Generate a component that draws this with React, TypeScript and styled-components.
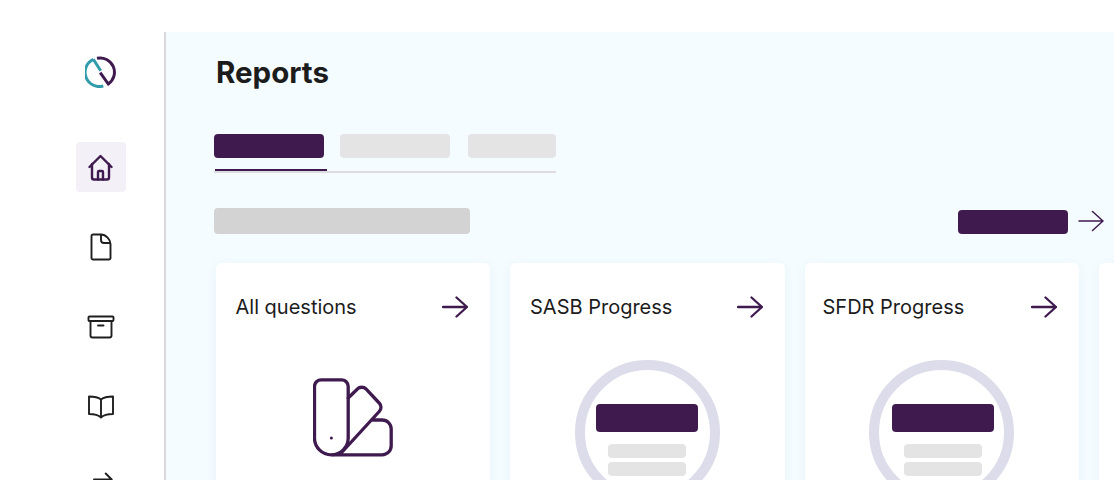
import styled, { createGlobalStyle } from "styled-components";

const GlobalStyle = createGlobalStyle`
  html, body {
    margin: 0;
    padding: 0;
    height: 480px;
    overflow: hidden;
    background: #fff;
  }
  * { box-sizing: border-box; }
`;

const Page = styled.div`
  display: flex;
  height: 480px;
  padding-top: 32px;
  font-family: "Inter", "Liberation Sans", sans-serif;
  overflow: hidden;
`;
const Sidebar = styled.nav`
  flex: 0 0 166px;
  border-right: 2px solid #d9d9dc;
  padding: 16px 38px 0 76px;
  display: flex;
  flex-direction: column;
  align-items: center;
`;
const Logo = styled.div`
  flex: none;
  height: 48px;
  margin-bottom: 46px;
  display: flex;
  align-items: center;
`;
const NavItem = styled.a<{ $active?: boolean }>`
  flex: 0 0 50px;
  width: 50px;
  margin-bottom: 30px;
  display: flex;
  align-items: center;
  justify-content: center;
  border-radius: 4px;
  background: ${(p) => (p.$active ? "#f3f0f8" : "transparent")};
  color: ${(p) => (p.$active ? "#3f1a4f" : "#1f1f1f")};
`;
const NavExit = styled(NavItem)`
  align-items: flex-start;
  padding: 10px 0 0 4px;
`;
const Main = styled.main`
  flex: 1;
  min-width: 0;
  background: #f4fcff;
  padding: 24px 0 0 48px;
`;
const Title = styled.h1`
  margin: 0 0 46px 2px;
  font-size: 29.5px;
  line-height: 32px;
  font-weight: 700;
  color: #1c1c1c;
`;
const Skeleton = styled.div<{ $w: number; $h: number; $tone: "dark" | "light" | "mid" }>`
  flex: none;
  width: ${(p) => p.$w}px;
  height: ${(p) => p.$h}px;
  border-radius: 4px;
  background: ${(p) =>
    p.$tone === "dark" ? "#3f1a4f" : p.$tone === "mid" ? "#d3d3d3" : "#e4e4e4"};
`;
const Tabs = styled.div`
  width: 342px;
  display: flex;
  border-bottom: 2px solid #dcdce2;
  padding-bottom: 13px;
  position: relative;
`;
const TabSlot = styled.div<{ $w: number }>`
  flex: none;
  width: ${(p) => p.$w}px;
`;
const TabIndicator = styled.div`
  position: absolute;
  left: 1px;
  bottom: 0;
  width: 112px;
  height: 2px;
  background: #3f1a4f;
`;
const SectionRow = styled.div`
  margin-top: 35px;
  display: flex;
  align-items: flex-start;
  justify-content: space-between;
  padding-right: 10px;
`;
const SeeAll = styled.div`
  display: flex;
  align-items: flex-start;
  gap: 10px;
  padding-top: 2px;
  color: #3f1a4f;
`;
const Cards = styled.div`
  margin: 29px 0 0 1.5px;
  display: flex;
  gap: 20px;
`;
const Card = styled.article`
  flex: 0 0 274.5px;
  height: 300px;
  background: #fff;
  border-radius: 6px;
  box-shadow: 0 2px 12px rgba(60, 110, 140, 0.06);
  padding-top: 32px;
`;
const CardHead = styled.div<{ $left: number }>`
  display: flex;
  align-items: center;
  justify-content: space-between;
  height: 24px;
  padding: 0 22px 0 ${(p) => p.$left}px;
  color: #3f1a4f;
`;
const CardTitle = styled.span`
  font-size: 20px;
  line-height: 24px;
  color: #1c1c1c;
`;
const CardBody = styled.div<{ $top: number }>`
  margin-top: ${(p) => p.$top}px;
  display: flex;
  justify-content: center;
  color: #3f1a4f;
`;
const Ring = styled.div<{ $nudge: number }>`
  width: 145px;
  height: 145px;
  border: 10px solid #dddcea;
  border-radius: 50%;
  padding: 34px 0 0 ${(p) => p.$nudge}px;
  display: flex;
  flex-direction: column;
  align-items: center;
`;
const RingBars = styled.div`
  margin-top: 12px;
  display: flex;
  flex-direction: column;
  gap: 4px;
`;

const ArrowRight = ({ width = 2.3 }: { width?: number }) => (
  <svg width="26" height="22" viewBox="0 0 26 22" fill="none" stroke="currentColor" strokeWidth={width} strokeLinecap="round" strokeLinejoin="round">
    <path d="M1 11h24M14.500 1.500 25 11 14.500 20.500" />
  </svg>
);

const ExitIcon = () => (
  <svg width="20" height="15" viewBox="0 0 20 15" fill="none" stroke="currentColor" strokeWidth="1.9" strokeLinecap="round" strokeLinejoin="round">
    <path d="M1 7.500h17.700M12.700 1.500l6 6-6 6" />
  </svg>
);

const LogoMark = () => (
  <svg width="32" height="32" viewBox="0 0 32 32" fill="none" strokeWidth="3">
    <path d="M8.300 3.300A14.300 14.300 0 0 0 18.300 30" stroke="#2f9bab" />
    <path d="M8.300 3.300 15.700 14.700" stroke="#2f9bab" />
    <path d="M12 2.300A14.300 14.300 0 0 1 23.300 28L15.200 16.700" stroke="#3f1a4f" />
  </svg>
);

const HomeIcon = () => (
  <svg width="26" height="27" viewBox="0 0 26 27" fill="none" stroke="currentColor" strokeWidth="2.4" strokeLinecap="round" strokeLinejoin="round">
    <path d="M1.500 13 12.500 2l11 11" />
    <path d="M4 10v13.500a2 2 0 0 0 2 2h13a2 2 0 0 0 2-2V10" />
    <path d="M10 25.500V18a1 1 0 0 1 1-1h3a1 1 0 0 1 1 1v7.500" />
  </svg>
);

const FileIcon = () => (
  <svg width="22" height="28" viewBox="0 0 22 28" fill="none" stroke="currentColor" strokeWidth="1.9" strokeLinejoin="round">
    <path d="M3 1.500h8c5 0 9.500 5 9.500 9.500v14a1.500 1.500 0 0 1-1.500 1.500H3A1.500 1.500 0 0 1 1.500 25V3A1.500 1.500 0 0 1 3 1.500z" />
    <path d="M11 1.500V7a3 3 0 0 0 3 3h6.500" />
  </svg>
);

const ArchiveIcon = () => (
  <svg width="28" height="24" viewBox="0 0 28 24" fill="none" stroke="currentColor" strokeWidth="1.9" strokeLinecap="round" strokeLinejoin="round">
    <rect x="1.500" y="1.500" width="25" height="4.500" rx="1" />
    <path d="M3.500 6v14.500a2 2 0 0 0 2 2h17a2 2 0 0 0 2-2V6" />
    <path d="M11 10.500h5.500" />
  </svg>
);

const BookIcon = () => (
  <svg width="28" height="24" viewBox="0 0 28 24" fill="none" stroke="currentColor" strokeWidth="1.9" strokeLinejoin="round">
    <path d="M14 4.500C11.500 2.500 7 1.500 2 1.500V19c5 0 9.500 1 12 3.500 2.500-2.500 7-3.500 12-3.500V1.500c-5 0-9.500 1-12 3z" />
    <path d="M14 4.500v18" />
  </svg>
);

const SwatchIcon = () => (
  <svg width="80" height="80" viewBox="0.300 0 80 80" fill="none" stroke="currentColor" strokeWidth="3.300" strokeLinecap="round" strokeLinejoin="round">
    <path d="M1.800 8.500a6.700 6.700 0 0 1 6.700-6.700h20.300a6.700 6.700 0 0 1 6.700 6.700V60a16.800 16.800 0 0 1-33.700 0z" />
    <path d="M35.500 20 44.500 11.200a6.200 6.200 0 0 1 9 0L66.500 25a6 6 0 0 1 0 8.500L28.500 75" />
    <path d="M60 42h9.500a9 9 0 0 1 9 9v16.800a9 9 0 0 1-9 9H20" />
    <circle cx="18.700" cy="60" r="1.500" fill="currentColor" stroke="none" />
  </svg>
);

const progressCards = [
  { title: "SASB Progress", left: 20, nudge: 0 },
  { title: "SFDR Progress", left: 18, nudge: 3 },
];

export default function App() {
  return (
    <>
      <GlobalStyle />
      <Page>
        <Sidebar>
          <Logo>
            <LogoMark />
          </Logo>
          <NavItem $active>
            <HomeIcon />
          </NavItem>
          <NavItem>
            <FileIcon />
          </NavItem>
          <NavItem>
            <ArchiveIcon />
          </NavItem>
          <NavItem>
            <BookIcon />
          </NavItem>
          <NavExit>
            <ExitIcon />
          </NavExit>
        </Sidebar>
        <Main>
          <Title>Reports</Title>
          <Tabs>
            <TabSlot $w={126}>
              <Skeleton $w={110} $h={24} $tone="dark" />
            </TabSlot>
            <TabSlot $w={128}>
              <Skeleton $w={110} $h={24} $tone="light" />
            </TabSlot>
            <TabSlot $w={88}>
              <Skeleton $w={88} $h={24} $tone="light" />
            </TabSlot>
            <TabIndicator />
          </Tabs>
          <SectionRow>
            <Skeleton $w={256} $h={26} $tone="mid" />
            <SeeAll>
              <Skeleton $w={110} $h={24} $tone="dark" />
              <ArrowRight width={1.5} />
            </SeeAll>
          </SectionRow>
          <Cards>
            <Card>
              <CardHead $left={20}>
                <CardTitle>All questions</CardTitle>
                <ArrowRight />
              </CardHead>
              <CardBody $top={59}>
                <SwatchIcon />
              </CardBody>
            </Card>
            {progressCards.map((card) => (
              <Card key={card.title}>
                <CardHead $left={card.left}>
                  <CardTitle>{card.title}</CardTitle>
                  <ArrowRight />
                </CardHead>
                <CardBody $top={41}>
                  <Ring $nudge={card.nudge}>
                    <Skeleton $w={102} $h={28} $tone="dark" />
                    <RingBars>
                      <Skeleton $w={78} $h={14} $tone="light" />
                      <Skeleton $w={78} $h={14} $tone="light" />
                    </RingBars>
                  </Ring>
                </CardBody>
              </Card>
            ))}
            <Card />
          </Cards>
        </Main>
      </Page>
    </>
  );
}
